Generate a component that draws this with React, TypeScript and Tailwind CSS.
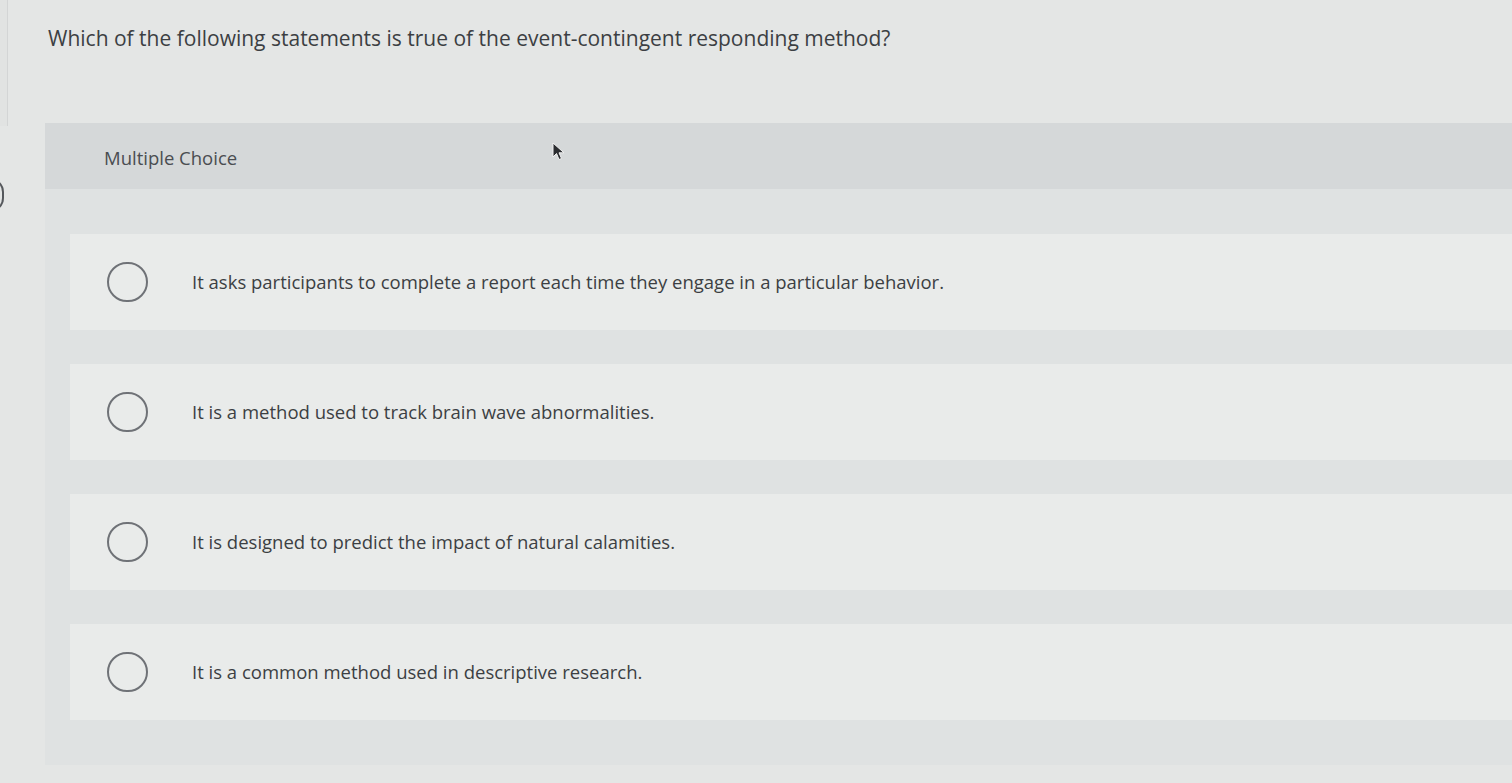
import React from "react";

const options = [
  "It asks participants to complete a report each time they engage in a particular behavior.",
  "It is a method used to track brain wave abnormalities.",
  "It is designed to predict the impact of natural calamities.",
  "It is a common method used in descriptive research.",
];

function Cursor() {
  return (
    <svg width="14" height="20" viewBox="0 0 14 20" className="absolute left-[552px] top-[142px]">
      <path d="M1 1 L1 15 L4.5 11.5 L7 17.5 L9.5 16.5 L7 10.8 L12 10.8 Z" fill="#2b2d30" stroke="#f2f2f2" strokeWidth="1" />
    </svg>
  );
}

export default function App() {
  return (
    <div className="relative min-h-screen overflow-hidden bg-[#e4e6e5] font-['Open_Sans',sans-serif] text-[#3c3f43]">
      <div className="absolute left-0 top-0 h-[126px] w-[8px] border-r border-[#d3d5d5] bg-[#e1e3e2]" />
      <div className="absolute left-[-10px] top-[178px] h-[34px] w-[14px] rounded-r-full border-2 border-[#55585c]" />

      <div className="pl-[48px] pt-[24px]">
        <h1 className="text-[21px] leading-[28px]">
          Which of the following statements is true of the event-contingent responding method?
        </h1>
      </div>

      <div className="ml-[45px] mt-[71px] bg-[#dfe2e2]">
        <div className="flex h-[66px] items-center bg-[#d5d8d9] pl-[59px] pt-[4px] text-[18.5px] text-[#4a4d51]">
          Multiple Choice
        </div>
        <div className="flex flex-col gap-[34px] pb-[45px] pl-[25px] pt-[45px]">
          {options.map((text) => (
            <div key={text} className="flex h-[96px] items-center bg-[#e9ebea] pl-[37px]">
              <div className="h-[40px] w-[41px] shrink-0 rounded-full border-2 border-[#6f7277]" />
              <span className="ml-[44px] text-[18.5px] text-[#3c3f43]">{text}</span>
            </div>
          ))}
        </div>
      </div>

      <Cursor />
    </div>
  );
}
